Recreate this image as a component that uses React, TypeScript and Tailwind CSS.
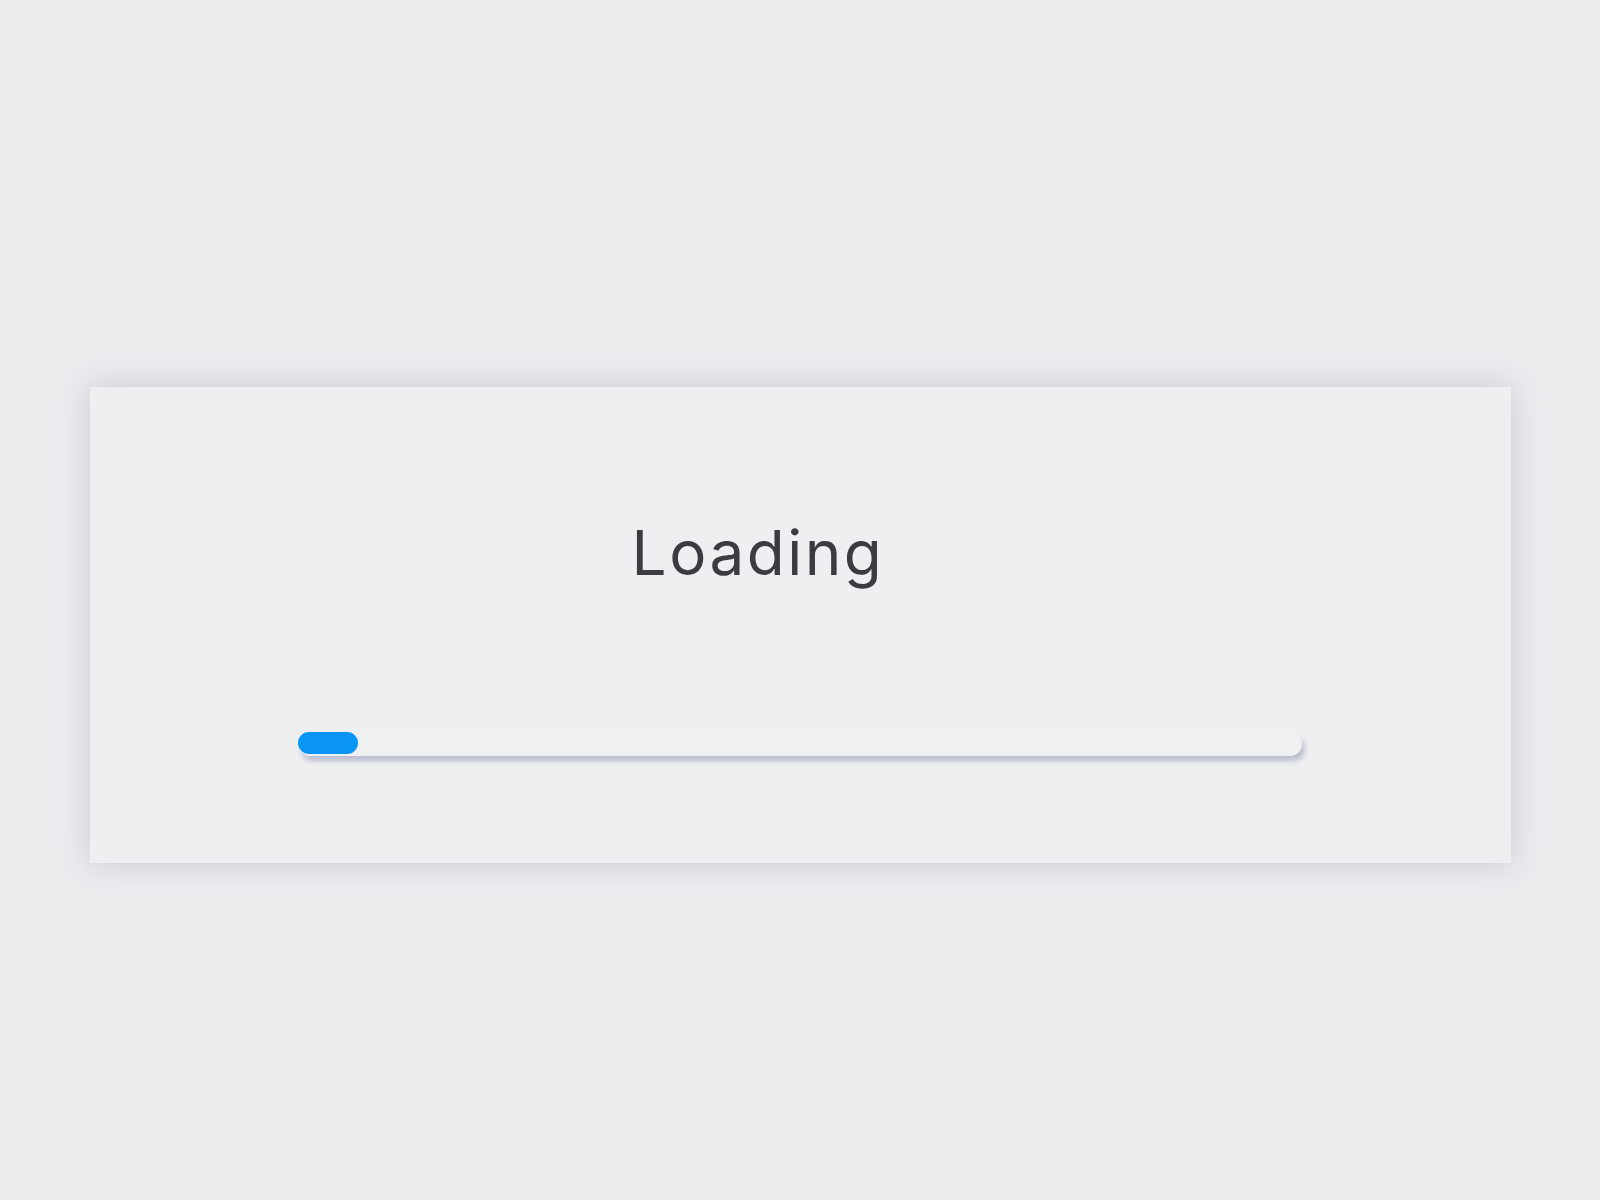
export default function App() {
  const progress = 6;

  return (
    <div className="flex min-h-[1200px] w-full items-center justify-center bg-[#eaecee] pt-[50px] font-['Inter',sans-serif]">
      <div className="flex h-[476px] w-[1421px] flex-col items-center bg-[#eeeff1] shadow-[0_0_30px_rgba(176,180,194,0.6)]">
        <h1 className="mt-[135px] pr-[84px] text-[62px] font-normal leading-none tracking-[2.5px] text-[#3b3c40]">
          Loading
        </h1>
        <div className="mt-[148px] h-[24px] w-[1004px] rounded-full bg-[#eef0f2] shadow-[3px_5px_5px_rgba(170,174,196,0.75)]">
          <div
            className="h-[22px] rounded-full bg-[#0a95f4]"
            style={{ width: `${progress}%` }}
          />
        </div>
      </div>
    </div>
  );
}
